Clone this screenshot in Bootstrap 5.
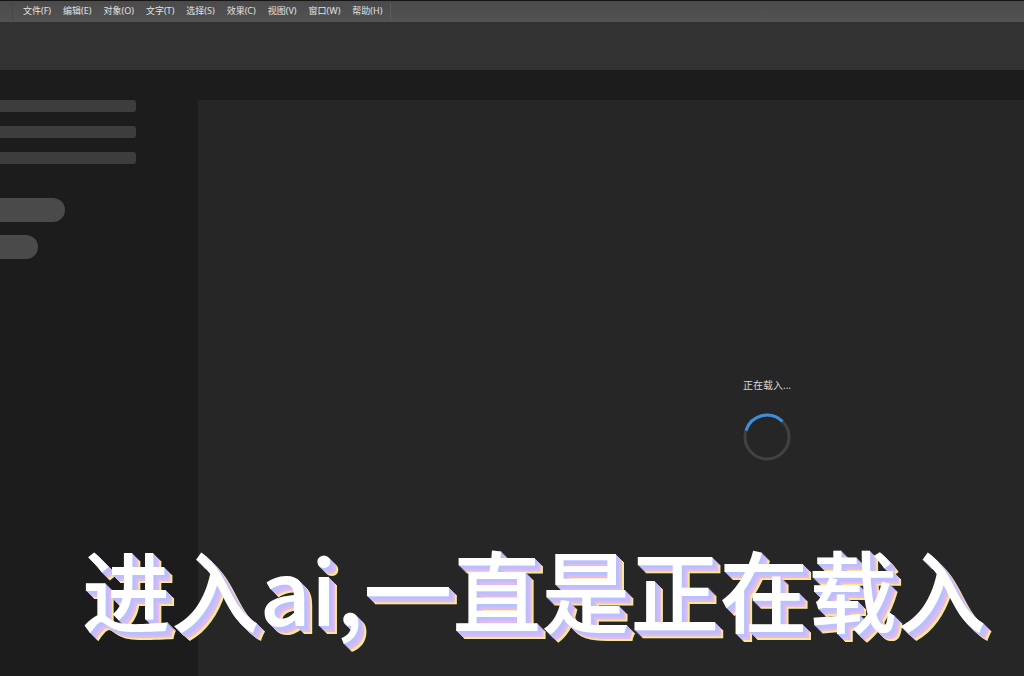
<!DOCTYPE html>
<html lang="zh-CN">
<head>
<meta charset="utf-8">
<meta name="viewport" content="width=device-width, initial-scale=1">
<title>正在载入</title>
<link href="https://cdn.jsdelivr.net/npm/bootstrap@5.3.0/dist/css/bootstrap.min.css" rel="stylesheet">
<style>
body { background: #1c1c1c; color: #dcdcdc; font-family: "Noto Sans", "Noto Sans CJK SC", sans-serif; }
.menu-bar { height: 22px; padding-left: 12px; background: linear-gradient(#4a4a4a, #535353); border-top: 1px solid #161616; }
.menu-list { gap: 12px; padding: 0 8px 0 10px; height: 18px; border-left: 1px solid #474747; border-right: 1px solid #5c5c5c; }
.menu-list a { font-size: 9px; line-height: 16px; color: #e2e2e2; white-space: nowrap; }
.option-bar { height: 48px; background: #323232; }
.side { width: 198px; padding-top: 30px; }
.line-ph { width: 136px; height: 12px; margin-bottom: 14px; border-radius: 0 3px 3px 0; background: #3d3d3d; }
.pill-ph { width: 65px; height: 24px; margin-bottom: 13px; border-radius: 0 12px 12px 0; background: #4a4a4a; }
.pill-short { width: 38px; }
.pill-group { padding-top: 34px; }
.stage { margin-top: 30px; padding: 0 0 0 312px; background: #262626; }
.loading { width: 120px; padding-top: 276px; }
.loading p { font-size: 10px; line-height: 18px; color: #d8d8d8; }
.loading svg { margin-top: 19px; }
.caption { position: absolute; left: 0; right: 0; bottom: 23px; text-align: center; padding-left: 44px;
  font-family: "Noto Sans CJK SC", sans-serif; font-weight: 500; font-size: 89px; line-height: 130px; color: #fff; white-space: nowrap;
  text-shadow: 1px 1px #b9c0fb, 2px 2px #b9c0fb, 3px 3px #b9c0fb, 4px 4px #d0bcf6, 5px 5px #e6b9ec, 6px 6px #e6b9ec, 7px 7px #f5e899, 8px 8px #f5e899; }
</style>
</head>
<body>
<div class="position-relative d-flex flex-column min-vh-100 overflow-hidden">
  <header>
    <nav class="menu-bar d-flex align-items-center" aria-label="主菜单">
      <div class="menu-list d-flex">
        <a class="text-decoration-none" href="#">文件(F)</a>
        <a class="text-decoration-none" href="#">编辑(E)</a>
        <a class="text-decoration-none" href="#">对象(O)</a>
        <a class="text-decoration-none" href="#">文字(T)</a>
        <a class="text-decoration-none" href="#">选择(S)</a>
        <a class="text-decoration-none" href="#">效果(C)</a>
        <a class="text-decoration-none" href="#">视图(V)</a>
        <a class="text-decoration-none" href="#">窗口(W)</a>
        <a class="text-decoration-none" href="#">帮助(H)</a>
      </div>
    </nav>
    <div class="option-bar"></div>
  </header>
  <div class="d-flex flex-grow-1">
    <aside class="side flex-shrink-0">
      <div class="line-ph"></div>
      <div class="line-ph"></div>
      <div class="line-ph mb-0"></div>
      <div class="pill-group">
        <div class="pill-ph"></div>
        <div class="pill-ph pill-short"></div>
      </div>
    </aside>
    <main class="stage flex-grow-1 d-flex justify-content-center">
      <div class="loading text-center">
        <p class="mb-0">正在载入...</p>
        <svg width="48" height="48" viewBox="0 0 48 48" fill="none" stroke-width="3" aria-hidden="true">
          <circle cx="24" cy="24" r="22" stroke="#424242"/>
          <path d="M3 17.500A22 22 0 0 1 39.500 8.400" stroke="#3f8ddd"/>
        </svg>
      </div>
    </main>
  </div>
  <div class="caption">进入ai,一直是正在载入</div>
</div>
<script src="https://cdn.jsdelivr.net/npm/bootstrap@5.3.0/dist/js/bootstrap.bundle.min.js"></script>
</body>
</html>
